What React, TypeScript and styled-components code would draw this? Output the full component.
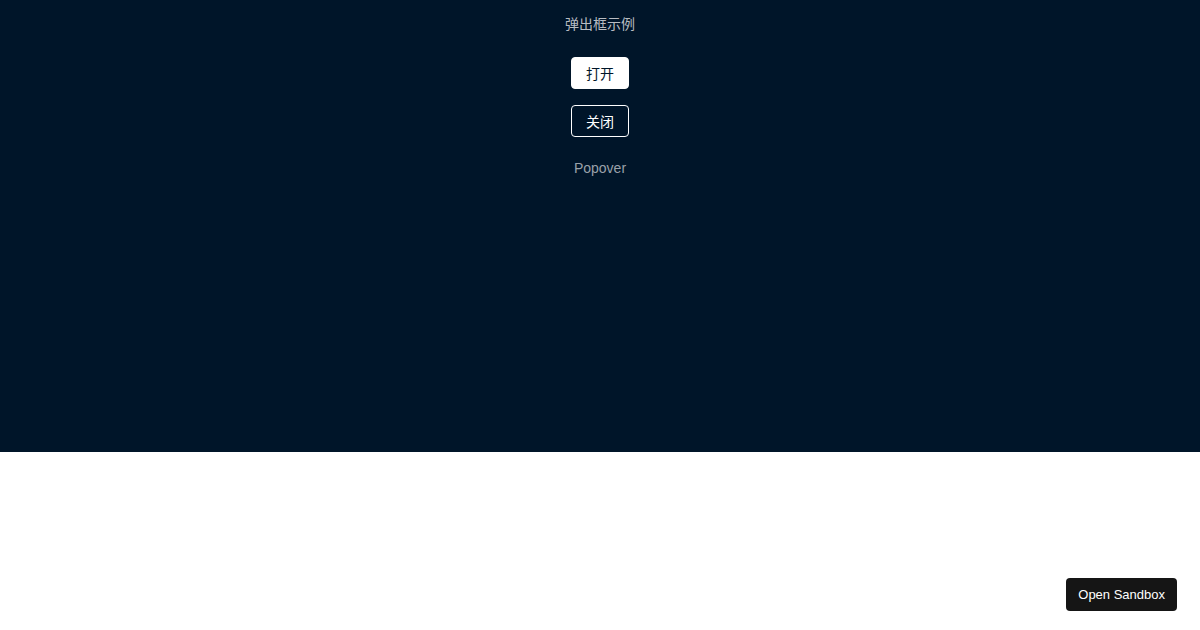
import React from 'react';
import styled, { createGlobalStyle } from 'styled-components';

const GlobalStyle = createGlobalStyle`
  html, body {
    margin: 0;
    padding: 0;
    background: #ffffff;
    font-family: 'Liberation Sans', Arial, 'Noto Sans CJK SC', sans-serif;
  }
`;

const Stage = styled.div`
  background: #001529;
  height: 452px;
  display: flex;
  flex-direction: column;
  align-items: center;
  padding-top: 13px;
  box-sizing: border-box;
`;

const Title = styled.div`
  font-size: 14px;
  line-height: 22px;
  color: #b8bcc2;
  margin-bottom: 22px;
`;

const Button = styled.button<{ $ghost?: boolean }>`
  height: 32px;
  padding: 0 14px;
  font-family: inherit;
  font-size: 14px;
  border-radius: 4px;
  cursor: pointer;
  margin-bottom: 16px;
  border: 1px solid #ffffff;
  background: ${(p) => (p.$ghost ? 'transparent' : '#ffffff')};
  color: ${(p) => (p.$ghost ? '#ffffff' : '#001529')};
`;

const Caption = styled.div`
  font-size: 14px;
  line-height: 22px;
  color: #9aa1a9;
  margin-top: 4px;
`;

const SandboxLink = styled.a`
  position: fixed;
  right: 23px;
  bottom: 19px;
  height: 33px;
  padding: 0 12px;
  display: flex;
  align-items: center;
  background: #151515;
  color: #ffffff;
  font-size: 13px;
  border-radius: 4px;
  text-decoration: none;
`;

export default function App() {
  return (
    <>
      <GlobalStyle />
      <Stage>
        <Title>弹出框示例</Title>
        <Button>打开</Button>
        <Button $ghost>关闭</Button>
        <Caption>Popover</Caption>
      </Stage>
      <SandboxLink href="#">Open Sandbox</SandboxLink>
    </>
  );
}
